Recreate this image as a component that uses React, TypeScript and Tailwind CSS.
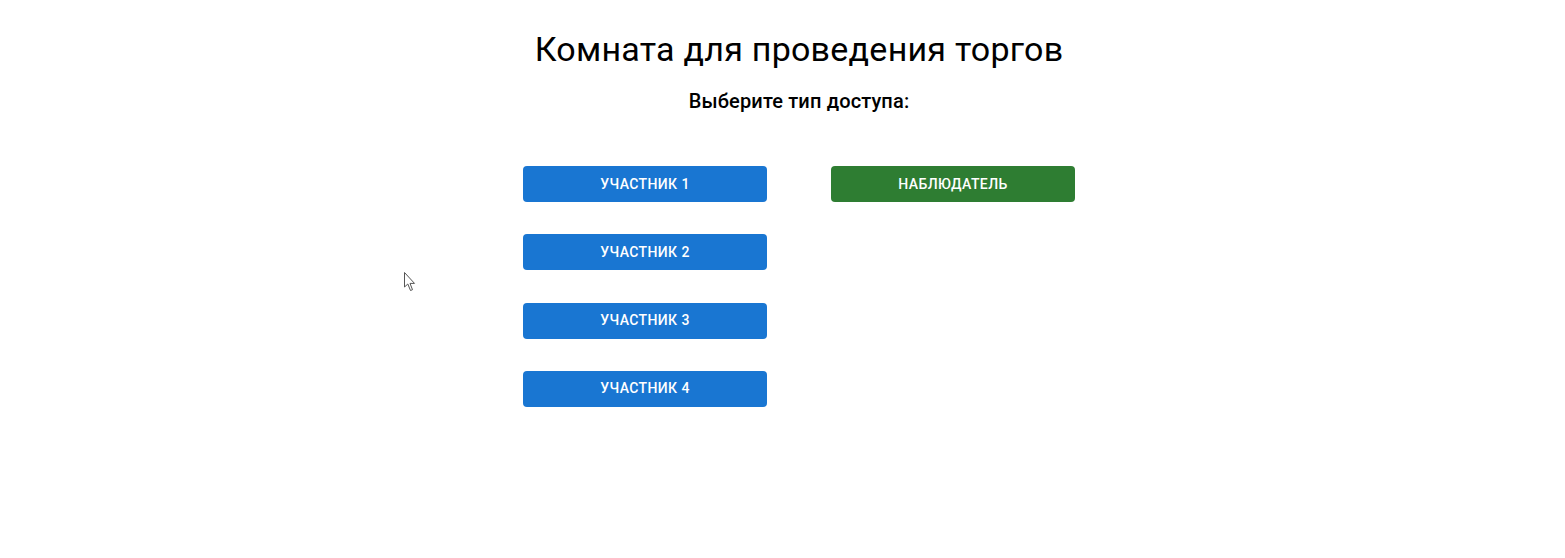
import React from "react";

const btn =
  "h-[36px] w-[244px] rounded-[4px] text-white text-[14px] font-medium uppercase tracking-[0.4px] flex items-center justify-center";

export default function App() {
  return (
    <div
      className="relative w-[1565px] h-[558px] bg-white text-black"
      style={{ fontFamily: "Roboto, 'Noto Sans', sans-serif" }}
    >
      <div className="flex flex-col items-center pl-[33px] pt-[28px]">
        <h1 className="text-[34px] leading-[42px] font-normal tracking-[0.25px]">
          Комната для проведения торгов
        </h1>
        <h2 className="mt-[15px] text-[20px] leading-[32px] font-medium tracking-[0.15px]">
          Выберите тип доступа:
        </h2>
        <div className="mt-[49px] flex gap-[64px]">
          <div className="flex flex-col gap-[32.3px]">
            <button className={`${btn} bg-[#1976d2]`}>Участник 1</button>
            <button className={`${btn} bg-[#1976d2]`}>Участник 2</button>
            <button className={`${btn} bg-[#1976d2]`}>Участник 3</button>
            <button className={`${btn} bg-[#1976d2]`}>Участник 4</button>
          </div>
          <div className="flex flex-col">
            <button className={`${btn} bg-[#2e7d32]`}>Наблюдатель</button>
          </div>
        </div>
      </div>
      <svg
        className="absolute left-[403px] top-[271px]"
        width="16"
        height="22"
        viewBox="0 0 16 22"
      >
        <path
          d="M1.5 1.5 L1.5 16 L4.8 13 L7.5 19.5 L9.5 18.7 L7 12.4 L11.5 12.4 Z"
          fill="white"
          stroke="#555"
          strokeWidth="1"
          strokeLinejoin="round"
        />
      </svg>
    </div>
  );
}
